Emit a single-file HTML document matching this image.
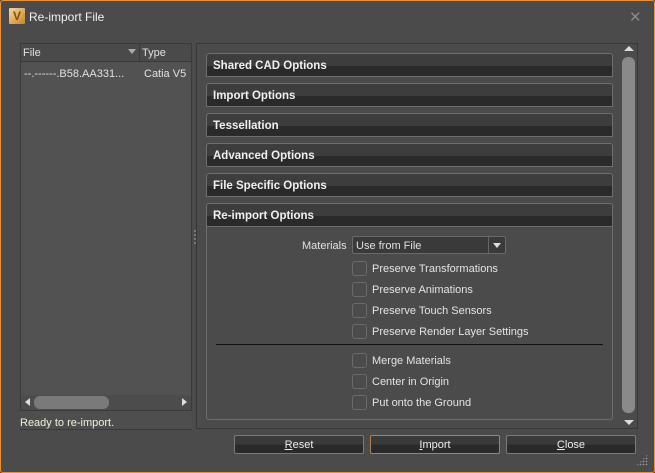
<!DOCTYPE html>
<html><head><style>
*{box-sizing:border-box;margin:0;padding:0}
body{width:655px;height:473px;background:#4b4b4b;font-family:"Liberation Sans",sans-serif;font-size:11px;color:#e0e0e0;position:relative;overflow:hidden}
.win{position:absolute;left:0;top:0;width:655px;height:473px;border:1px solid #e8912f;border-radius:3px}
.a{position:absolute}
.sec{position:absolute;left:206px;width:407px;height:24px;border:1px solid #6e6e6e;border-radius:3px 3px 0 0;background:linear-gradient(#3d3d3d 0,#3d3d3d 55%,#2a2a2a 55%);font-weight:bold;color:#f0f0f0;font-size:11.5px;padding:6px 0 0 6px}
.cb{position:absolute;left:352px;width:15px;height:15px;border:1px solid #6a6a6a;border-radius:3px;background:#4b4b4b}
.lb{position:absolute;left:372px;font-size:11px;color:#e4e4e4}
.btn{position:absolute;top:435px;width:130px;height:19px;border:1px solid #7a7a7a;border-radius:2px;background:linear-gradient(#3a3a3a 50%,#2a2a2a 50%);text-align:center;padding-top:3px;color:#eee}
</style></head><body>
<div class="win"></div>
<div class="a" style="left:9px;top:8px;width:16px;height:16px;background:linear-gradient(135deg,#f5d9a0,#c98520);border-radius:1px;color:#8a4a00;font-weight:bold;font-size:12px;text-align:center;line-height:16px">V</div>
<div class="a" style="left:29px;top:10px;font-size:12px;color:#f0f0f0">Re-import File</div>
<div class="a" style="left:629px;top:8px;font-size:15px;color:#8a8a8a">✕</div>

<!-- left panel -->
<div class="a" style="left:20px;top:43px;width:172px;height:387px;background:#525252;border:1px solid #3a3a3a"></div>
<div class="a" style="left:21px;top:44px;width:170px;height:18px;background:#4a4a4a;border-bottom:1px solid #3a3a3a"></div>
<div class="a" style="left:139px;top:44px;width:1px;height:18px;background:#3a3a3a"></div>
<div class="a" style="left:23px;top:47px">File</div>
<div class="a" style="left:128px;top:49px;width:0;height:0;border-left:4px solid transparent;border-right:4px solid transparent;border-top:5px solid #aaa"></div>
<div class="a" style="left:142px;top:47px">Type</div>
<div class="a" style="left:24px;top:68px">--.------.B58.AA331...</div>
<div class="a" style="left:144px;top:68px">Catia V5</div>
<div class="a" style="left:21px;top:395px;width:170px;height:15px;background:#4c4c4c"></div>
<div class="a" style="left:34px;top:396px;width:75px;height:13px;background:#7a7a7a;border-radius:6px"></div>
<div class="a" style="left:25px;top:398px;border-top:4px solid transparent;border-bottom:4px solid transparent;border-right:5px solid #ddd"></div>
<div class="a" style="left:182px;top:398px;border-top:4px solid transparent;border-bottom:4px solid transparent;border-left:5px solid #ddd"></div>
<div class="a" style="left:20px;top:410px;width:172px;height:1px;background:#3a3a3a"></div>
<div class="a" style="left:20px;top:411px;width:172px;height:18px;background:#4e4e4e"></div>
<div class="a" style="left:20px;top:417px;color:#f0f0d8">Ready to re-import.</div>
<div class="a" style="left:194px;top:230px;width:2px;height:14px;border-left:2px dotted #777"></div>

<!-- right panel -->
<div class="a" style="left:196px;top:43px;width:442px;height:386px;border:1px solid #393939"></div>
<div class="sec" style="top:53px">Shared CAD Options</div>
<div class="sec" style="top:83px">Import Options</div>
<div class="sec" style="top:113px">Tessellation</div>
<div class="sec" style="top:143px">Advanced Options</div>
<div class="sec" style="top:173px">File Specific Options</div>
<div class="a" style="left:206px;top:203px;width:407px;height:217px;border:1px solid #6e6e6e;border-radius:3px"></div>
<div class="sec" style="top:203px">Re-import Options</div>
<div class="a" style="left:302px;top:240px">Materials</div>
<div class="a" style="left:352px;top:236px;width:154px;height:18px;border:1px solid #6a6a6a;border-radius:2px;background:#3a3a3a;padding:3px 0 0 3px">Use from File</div>
<div class="a" style="left:488px;top:237px;width:1px;height:16px;background:#666"></div>
<div class="a" style="left:493px;top:243px;border-left:4px solid transparent;border-right:4px solid transparent;border-top:5px solid #ddd"></div>
<div class="cb" style="top:261px"></div><div class="lb" style="top:263px">Preserve Transformations</div>
<div class="cb" style="top:282px"></div><div class="lb" style="top:284px">Preserve Animations</div>
<div class="cb" style="top:303px"></div><div class="lb" style="top:305px">Preserve Touch Sensors</div>
<div class="cb" style="top:324px"></div><div class="lb" style="top:326px">Preserve Render Layer Settings</div>
<div class="a" style="left:216px;top:344px;width:387px;height:1px;background:#111"></div>
<div class="cb" style="top:353px"></div><div class="lb" style="top:355px">Merge Materials</div>
<div class="cb" style="top:374px"></div><div class="lb" style="top:376px">Center in Origin</div>
<div class="cb" style="top:395px"></div><div class="lb" style="top:397px">Put onto the Ground</div>
<!-- scrollbar -->
<div class="a" style="left:624px;top:46px;border-left:5px solid transparent;border-right:5px solid transparent;border-bottom:5px solid #ddd"></div>
<div class="a" style="left:622px;top:57px;width:13px;height:356px;background:#8a8a8a;border-radius:6px"></div>
<div class="a" style="left:624px;top:420px;border-left:5px solid transparent;border-right:5px solid transparent;border-top:5px solid #ddd"></div>

<div class="btn" style="left:234px"><u>R</u>eset</div>
<div class="btn" style="left:370px;border-color:#b08050"><u>I</u>mport</div>
<div class="btn" style="left:506px"><u>C</u>lose</div>
<div class="a" style="left:636px;top:454px;width:12px;height:12px;background:radial-gradient(#999 35%,transparent 40%) 0 0/3px 3px;clip-path:polygon(100% 0,100% 100%,0 100%)"></div>
</body></html>
